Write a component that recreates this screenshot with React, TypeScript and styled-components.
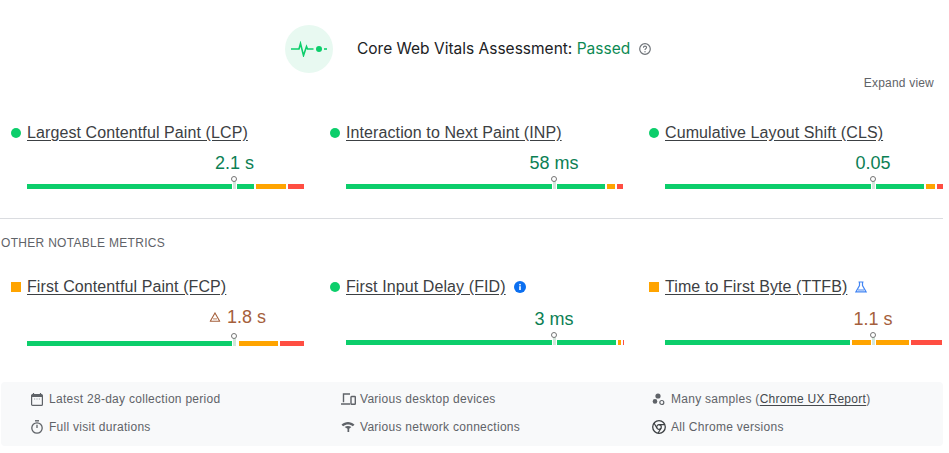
import React from 'react';
import styled, { createGlobalStyle } from 'styled-components';

const GlobalStyle = createGlobalStyle`
  html, body {
    margin: 0;
    background: #ffffff;
    font-family: "Liberation Sans", Arial, sans-serif;
  }
`;

const Page = styled.div`
  width: 943px;
  padding-top: 25px;
`;

const Header = styled.div`
  display: flex;
  align-items: center;
  padding-left: 285px;
`;

const Badge = styled.div`
  width: 48px;
  height: 48px;
  border-radius: 50%;
  background: #e8f9f1;
  display: flex;
  align-items: center;
  justify-content: center;
  margin-right: 24px;
`;

const HeaderText = styled.div`
  font-family: Inter, "Noto Sans", sans-serif;
  font-size: 15.500px;
  font-weight: 400;
  color: #202124;
  margin-right: 9px;
  margin-top: -1px;
`;

const Passed = styled.span`
  color: #0d8a54;
`;

const ExpandRow = styled.div`
  display: flex;
  justify-content: flex-end;
  padding: 2px 9px 0 0;
  height: 47px;
  line-height: 16px;
  font-size: 12px;
  letter-spacing: 0.2px;
  color: #5f6368;
`;

const MetricGrid = styled.div<{ $height: number }>`
  display: grid;
  grid-template-columns: 319px 319px 305px;
  grid-auto-rows: ${p => p.$height}px;
`;

const Metric = styled.div`
  padding-left: 11px;
`;

const TitleRow = styled.div`
  display: flex;
  align-items: center;
  height: 22px;
`;

const Dot = styled.span<{ $kind: 'good' | 'average' }>`
  flex: none;
  width: 10px;
  height: 10px;
  margin-right: 6px;
  background: ${p => (p.$kind === 'good' ? '#0cce6b' : '#ffa400')};
  border-radius: ${p => (p.$kind === 'good' ? '50%' : '0')};
`;

const Title = styled.a`
  font-size: 16px;
  letter-spacing: 0.1px;
  color: #3c4043;
  text-decoration: underline;
  text-underline-offset: 2px;
`;

const TitleIcon = styled.span`
  display: inline-flex;
  margin-left: 8px;
`;

const ValueRow = styled.div<{ $at: number; $top: number }>`
  padding-left: calc(16px + ${p => p.$at}px);
  margin-top: ${p => p.$top}px;
  height: 22px;
  line-height: 22px;
`;

const Value = styled.span<{ $kind: 'good' | 'average' }>`
  display: inline-flex;
  align-items: center;
  transform: translateX(-50%);
  white-space: nowrap;
  font-size: 18px;
  color: ${p => (p.$kind === 'good' ? '#0b8054' : '#a5603c')};
`;

const WarnIcon = styled.svg`
  margin-right: 7px;
`;

const Bar = styled.div<{ $top: number }>`
  position: relative;
  display: flex;
  gap: 2px;
  width: 277px;
  height: 5px;
  margin: ${p => p.$top}px 0 0 16px;
`;

const segmentColors = { good: '#0cce6b', average: '#ffa400', poor: '#ff4e42' };

const Segment = styled.div<{ $kind: keyof typeof segmentColors; $w: number }>`
  flex: none;
  width: ${p => p.$w}px;
  background: ${p => segmentColors[p.$kind]};
`;

const Marker = styled.div<{ $at: number }>`
  position: absolute;
  left: ${p => p.$at}px;
  top: -3px;
  bottom: 0;
  width: 3px;
  background: #d3e6db;
  box-shadow: -1px 0 0 #fff, 1px 0 0 #fff;
  &::before {
    content: '';
    position: absolute;
    left: -1.500px;
    top: -5px;
    width: 4px;
    height: 4px;
    border: 1px solid #757575;
    border-radius: 50%;
    background: #fff;
  }
`;

const Divider = styled.div`
  height: 1px;
  background: #dadce0;
`;

const SectionLabel = styled.div`
  padding: 16px 0 0 1px;
  height: 57px;
  box-sizing: border-box;
  line-height: 16px;
  font-size: 12px;
  letter-spacing: 0.3px;
  color: #5f6368;
`;

const InfoPanel = styled.div`
  display: grid;
  grid-template-columns: 310px 311px 1fr;
  grid-auto-rows: 28px;
  align-content: center;
  margin-left: 1px;
  height: 62px;
  padding: 0 0 2px 30px;
  background: #f8f9fa;
  border-radius: 4px;
`;

const InfoItem = styled.div`
  display: flex;
  align-items: center;
  font-size: 12px;
  letter-spacing: 0.28px;
  color: #5f6368;
  svg {
    flex: none;
    margin-right: 6px;
  }
`;

const InfoLink = styled.a`
  color: #45494d;
  text-decoration: underline;
  text-underline-offset: 2px;
`;

const Pulse = () => (
  <svg width="36" height="16" viewBox="0 0 36 16" fill="none">
    <path d="M0 8h8l1.500-5.500 3 12 3-9 1 2.500h6" stroke="#0cce6b" strokeWidth="1.600" />
    <circle cx="28" cy="8" r="3" fill="#0cce6b" />
    <path d="M33 8h3" stroke="#0cce6b" strokeWidth="1.600" />
  </svg>
);

const HelpIcon = () => (
  <svg width="12" height="12" viewBox="0 0 12 12" fill="none">
    <circle cx="6" cy="6" r="5.300" stroke="#70757a" strokeWidth="1.200" />
    <path d="M4.400 4.700c0-1 .7-1.600 1.600-1.600s1.600.6 1.600 1.400c0 1.100-1.600 1.200-1.600 2.400" stroke="#70757a" strokeWidth="1.100" />
    <circle cx="6" cy="8.700" r=".7" fill="#70757a" />
  </svg>
);

const InfoBlue = () => (
  <svg width="12" height="12" viewBox="0 0 12 12">
    <circle cx="6" cy="6" r="6" fill="#0b6ff0" />
    <rect x="5.200" y="5.200" width="1.600" height="3.800" fill="#fff" />
    <rect x="5.200" y="2.900" width="1.600" height="1.500" fill="#fff" />
  </svg>
);

const Flask = () => (
  <svg width="12" height="12" viewBox="0 0 12 12" fill="none">
    <path d="M3.500 1h5M4.500 1v3.500L1 10.800h10L7.500 4.500V1" stroke="#4285f4" strokeWidth="1.200" />
    <path d="M3 9h6" stroke="#4285f4" strokeWidth="1" />
  </svg>
);

const Warn = () => (
  <WarnIcon width="11" height="10" viewBox="0 0 11 10" fill="none">
    <path d="M5.500 1 10.200 9.300H.8z" stroke="#a5603c" strokeWidth="1.100" />
    <path d="M3.500 6.800h4" stroke="#c99a80" strokeWidth="1.200" />
  </WarnIcon>
);

const Calendar = () => (
  <svg width="12" height="13" viewBox="0 0 12 13" fill="none">
    <path d="M2.500 0v2M9.500 0v2" stroke="#5f6368" strokeWidth="1.200" />
    <rect x=".6" y="1.600" width="10.800" height="10.800" rx="1" stroke="#5f6368" strokeWidth="1.200" />
    <rect x="1" y="1.500" width="10" height="2.500" fill="#5f6368" />
    <path d="M3 6h1.200M5.400 6h1.200M7.800 6H9" stroke="#9aa0a6" />
  </svg>
);

const Timer = () => (
  <svg width="12" height="14" viewBox="0 0 12 14" fill="none">
    <path d="M4 .8h4" stroke="#5f6368" strokeWidth="1.400" />
    <circle cx="6" cy="8" r="5.200" stroke="#5f6368" strokeWidth="1.300" />
    <path d="M6 8V4.800" stroke="#5f6368" strokeWidth="1.300" />
  </svg>
);

const Devices = () => (
  <svg width="15" height="12" viewBox="0 0 15 12" fill="none" style={{ marginRight: 4 }}>
    <path d="M9 1H2.500v8.200M0 11h9" stroke="#5f6368" strokeWidth="1.400" />
    <rect x="10" y="3.500" width="4.300" height="7.800" rx=".6" stroke="#5f6368" strokeWidth="1.400" />
  </svg>
);

const Network = () => (
  <svg width="14" height="12" viewBox="0 0 14 12" fill="none" style={{ marginRight: 5 }}>
    <path d="M.5 3.800C4.300.2 9.700.2 13.500 3.800l-1.700 1.500C8.800 2.800 5.200 2.800 2.200 5.300z" fill="#5f6368" />
    <path d="M3.600 6c2-1.400 4.800-1.400 6.800 0L8.200 7.800V11H6.500V7.800z" fill="#5f6368" />
  </svg>
);

const Samples = () => (
  <svg width="14" height="13" viewBox="0 0 14 13" fill="none" style={{ marginRight: 5 }}>
    <circle cx="6" cy="3" r="2.600" fill="#5f6368" />
    <circle cx="3" cy="8.400" r="2.300" fill="#5f6368" />
    <circle cx="9.800" cy="9.500" r="2" stroke="#5f6368" strokeWidth="1.200" />
  </svg>
);

const ChromeLogo = () => (
  <svg width="14" height="14" viewBox="0 0 14 14" fill="none" style={{ marginRight: 5 }}>
    <circle cx="7" cy="7" r="6.300" stroke="#3c4043" strokeWidth="1.300" />
    <circle cx="7" cy="7" r="2.300" stroke="#3c4043" strokeWidth="1.200" />
    <path d="M7 4.700h5.800M5 8.200 2 3M9 8.200 6 13.200" stroke="#3c4043" strokeWidth="1.200" />
  </svg>
);

type Seg = { kind: keyof typeof segmentColors; w: number };
type MetricData = {
  title: string;
  kind: 'good' | 'average';
  value: string;
  valueAt: number;
  markerAt: number;
  segments: Seg[];
  titleIcon?: React.ReactNode;
  warn?: boolean;
  valueTop: number;
  barTop: number;
};

const coreMetrics: MetricData[] = [
  {
    title: 'Largest Contentful Paint (LCP)',
    kind: 'good',
    value: '2.1 s',
    valueAt: 207.500,
    markerAt: 205.500,
    valueTop: 8,
    barTop: 10,
    segments: [{ kind: 'good', w: 227 }, { kind: 'average', w: 30 }, { kind: 'poor', w: 16 }],
  },
  {
    title: 'Interaction to Next Paint (INP)',
    kind: 'good',
    value: '58 ms',
    valueAt: 208,
    markerAt: 206.500,
    valueTop: 8,
    barTop: 10,
    segments: [{ kind: 'good', w: 259 }, { kind: 'average', w: 8 }, { kind: 'poor', w: 6 }],
  },
  {
    title: 'Cumulative Layout Shift (CLS)',
    kind: 'good',
    value: '0.05',
    valueAt: 208,
    markerAt: 206.500,
    valueTop: 8,
    barTop: 10,
    segments: [{ kind: 'good', w: 259 }, { kind: 'average', w: 9 }, { kind: 'poor', w: 6 }],
  },
];

const otherMetrics: MetricData[] = [
  {
    title: 'First Contentful Paint (FCP)',
    kind: 'average',
    value: '1.8 s',
    valueAt: 210.500,
    markerAt: 205.500,
    warn: true,
    valueTop: 8,
    barTop: 13,
    segments: [{ kind: 'good', w: 210 }, { kind: 'average', w: 39 }, { kind: 'poor', w: 24 }],
  },
  {
    title: 'First Input Delay (FID)',
    kind: 'good',
    value: '3 ms',
    valueAt: 208,
    markerAt: 206.500,
    titleIcon: <InfoBlue />,
    valueTop: 10,
    barTop: 10,
    segments: [{ kind: 'good', w: 270 }, { kind: 'average', w: 2.500 }, { kind: 'poor', w: 1 }],
  },
  {
    title: 'Time to First Byte (TTFB)',
    kind: 'average',
    value: '1.1 s',
    valueAt: 208,
    markerAt: 206.500,
    titleIcon: <Flask />,
    valueTop: 10,
    barTop: 10,
    segments: [{ kind: 'good', w: 185 }, { kind: 'average', w: 57 }, { kind: 'poor', w: 31 }],
  },
];

const MetricCard = ({ m }: { m: MetricData }) => (
  <Metric>
    <TitleRow>
      <Dot $kind={m.kind} />
      <Title>{m.title}</Title>
      {m.titleIcon && <TitleIcon>{m.titleIcon}</TitleIcon>}
    </TitleRow>
    <ValueRow $at={m.valueAt} $top={m.valueTop}>
      <Value $kind={m.kind}>
        {m.warn && <Warn />}
        {m.value}
      </Value>
    </ValueRow>
    <Bar $top={m.barTop}>
      {m.segments.map((s, i) => (
        <Segment key={i} $kind={s.kind} $w={s.w} />
      ))}
      <Marker $at={m.markerAt} />
    </Bar>
  </Metric>
);

const App = () => {
  return (
    <Page>
      <GlobalStyle />
      <Header>
        <Badge>
          <Pulse />
        </Badge>
        <HeaderText>
          Core Web Vitals Assessment: <Passed>Passed</Passed>
        </HeaderText>
        <HelpIcon />
      </Header>
      <ExpandRow>Expand view</ExpandRow>
      <MetricGrid $height={96}>
        {coreMetrics.map(m => (
          <MetricCard key={m.title} m={m} />
        ))}
      </MetricGrid>
      <Divider />
      <SectionLabel>OTHER NOTABLE METRICS</SectionLabel>
      <MetricGrid $height={106}>
        {otherMetrics.map(m => (
          <MetricCard key={m.title} m={m} />
        ))}
      </MetricGrid>
      <InfoPanel>
        <InfoItem><Calendar />Latest 28-day collection period</InfoItem>
        <InfoItem><Devices />Various desktop devices</InfoItem>
        <InfoItem>
          <Samples />
          <span>Many samples (<InfoLink>Chrome UX Report</InfoLink>)</span>
        </InfoItem>
        <InfoItem><Timer />Full visit durations</InfoItem>
        <InfoItem><Network />Various network connections</InfoItem>
        <InfoItem><ChromeLogo />All Chrome versions</InfoItem>
      </InfoPanel>
    </Page>
  );
};

export default App;
